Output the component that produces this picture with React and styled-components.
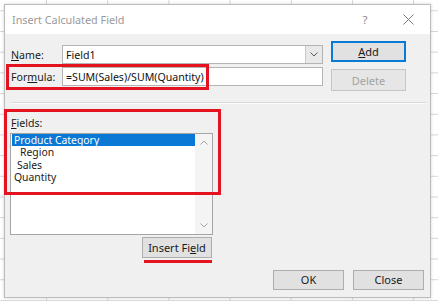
import React from 'react';
import styled, { createGlobalStyle } from 'styled-components';

const GlobalStyle = createGlobalStyle`
  html, body {
    margin: 0;
    padding: 0;
  }
  body {
    font-family: "Noto Sans", "Open Sans", sans-serif;
  }
`;

// excel sheet grid showing round the dialog
const Sheet = styled.div`
  width: 438px;
  height: 301px;
  box-sizing: border-box;
  padding: 4px 0 0 4px;
  overflow: hidden;
  background-color: #fff;
  background-image:
    linear-gradient(to right, #d6d6d6 1px, transparent 1px),
    linear-gradient(to bottom, #d6d6d6 1px, transparent 1px);
  background-size: 61.2px 100%, 100% 20.7px;
  background-position: 46px 0, 0 10.3px;
`;

const Dialog = styled.div`
  position: relative;
  width: 427px;
  height: 294px;
  box-sizing: border-box;
  border: 1px solid #bcbcbc;
  background: #f0f0f0;
  box-shadow: 0 0 3px rgba(0, 0, 0, 0.18);
  display: flex;
  flex-direction: column;
  font-size: 10.6px;
  color: #1a1a1a;
`;

const TitleBar = styled.div`
  height: 29px;
  background: #fff;
  display: flex;
  align-items: center;
  padding-left: 7px;
  color: #9a9a9a;
  font-size: 10.8px;
`;

const Title = styled.span`
  flex: 1;
`;

const TitleButton = styled.span`
  width: ${p => p.$w}px;
  display: flex;
  justify-content: center;
  align-items: center;
  color: #8c8c8c;
  font-size: 11.5px;
`;

const Body = styled.div`
  flex: 1;
  display: flex;
  flex-direction: column;
`;

const TopSection = styled.div`
  display: flex;
  gap: 8px;
  padding: 7px 0 0 6px;
`;

const Form = styled.div`
  width: 312px;
  margin-top: 4px;
  display: flex;
  flex-direction: column;
  gap: 3px;
`;

const Row = styled.div`
  display: flex;
  align-items: center;
  height: 19px;
`;

const Label = styled.label`
  width: 51px;
  flex-shrink: 0;
`;

const Key = styled.span`
  text-decoration: underline;
  text-underline-offset: 1px;
`;

const Field = styled.div`
  flex: 1;
  height: 19px;
  box-sizing: border-box;
  border: 1px solid #b4b4b4;
  background: #fff;
  display: flex;
  align-items: center;
  padding-left: 3px;
  color: #111;
`;

const FieldText = styled.span`
  flex: 1;
`;

const DropButton = styled.span`
  width: 16px;
  height: 17px;
  border-left: 1px solid #c8c8c8;
  background: #e8e8e8;
  display: flex;
  align-items: center;
  justify-content: center;
`;

const ButtonColumn = styled.div`
  display: flex;
  flex-direction: column;
  gap: 7px;
`;

const Button = styled.button`
  width: ${p => p.$w || 71}px;
  height: ${p => p.$h || 21}px;
  box-sizing: border-box;
  margin: 0;
  padding: 0;
  font-family: inherit;
  font-size: 11px;
  background: ${p => (p.disabled ? '#e6e6e6' : '#e1e1e1')};
  color: ${p => (p.disabled ? '#a3a3a3' : '#1a1a1a')};
  border: ${p => (p.$default ? '2px solid #0a7bd3' : '1px solid #adadad')};
  ${p => p.disabled && 'border-color: #c6c6c6;'}
`;

const Separator = styled.div`
  margin: 11px 4px 0 6px;
  height: 0;
  border-top: 1px solid #d9d9d9;
  border-bottom: 1px solid #fbfbfb;
`;

const FieldsSection = styled.div`
  width: 203px;
  margin-left: 5px;
  margin-top: 12px;
  display: flex;
  flex-direction: column;
  align-items: flex-end;
`;

const FieldsLabel = styled.div`
  align-self: stretch;
  padding-left: 1px;
  line-height: 14px;
`;

const ListBox = styled.div`
  margin-top: 3px;
  width: 203px;
  height: 102px;
  box-sizing: border-box;
  border: 1px solid #a5a5a5;
  background: #fff;
  display: flex;
`;

const Items = styled.div`
  flex: 1;
  padding: 0 0 0 1px;
`;

const Item = styled.div`
  height: 12.4px;
  line-height: 12.4px;
  font-size: 10.4px;
  padding-left: ${p => p.$indent}px;
  background: ${p => (p.$selected ? '#0a78d4' : 'transparent')};
  color: ${p => (p.$selected ? '#fff' : '#1a1a1a')};
  white-space: nowrap;
`;

const ScrollTrack = styled.div`
  width: 17px;
  background: #f4f4f4;
  display: flex;
  flex-direction: column;
  justify-content: space-between;
  align-items: center;
  padding: 6px 0 6px;
`;

const InsertButton = styled(Button)`
  margin-top: 2px;
  margin-right: 1px;
`;

const RedUnderline = styled.div`
  margin-top: 2px;
  margin-right: 1px;
  width: 68px;
  height: 2.5px;
  background: #e3141f;
`;

const Footer = styled.div`
  display: flex;
  justify-content: flex-end;
  gap: 9px;
  padding: 7px 6px 0 0;
`;

// red annotation boxes drawn over the dialog
const Highlight = styled.div`
  position: absolute;
  left: ${p => p.$x}px;
  top: ${p => p.$y}px;
  width: ${p => p.$w}px;
  height: ${p => p.$h}px;
  box-sizing: border-box;
  border: 3px solid #e3141f;
  pointer-events: none;
`;

const Chevron = ({ up, color = '#a6a6a6', w = 8 }) => (
  <svg width={w} height={w / 2 + 1} viewBox="0 0 8 5">
    <path d={up ? 'M0.5 4.5 L4 1 L7.5 4.5' : 'M0.5 0.5 L4 4 L7.5 0.5'} fill="none" stroke={color} strokeWidth="1" />
  </svg>
);

const fields = [
  { name: 'Product Category', indent: 2, selected: true },
  { name: 'Region', indent: 8 },
  { name: 'Sales', indent: 5 },
  { name: 'Quantity', indent: 2 },
];

export default function App() {
  return (
    <Sheet>
      <GlobalStyle />
      <Dialog>
        <TitleBar>
          <Title>Insert Calculated Field</Title>
          <TitleButton $w={42}>?</TitleButton>
          <TitleButton $w={44}>
            <svg width="11" height="11" viewBox="0 0 11 11">
              <path d="M0.5 0.5 L10.5 10.5 M10.5 0.5 L0.5 10.5" stroke="#7a7a7a" strokeWidth="1" />
            </svg>
          </TitleButton>
        </TitleBar>
        <Body>
          <TopSection>
            <Form>
              <Row>
                <Label><Key>N</Key>ame:</Label>
                <Field>
                  <FieldText>Field1</FieldText>
                  <DropButton><Chevron color="#5a5a5a" /></DropButton>
                </Field>
              </Row>
              <Row>
                <Label>For<Key>m</Key>ula:</Label>
                <Field>
                  <FieldText>=SUM(Sales)/SUM(Quantity)</FieldText>
                </Field>
              </Row>
            </Form>
            <ButtonColumn>
              <Button $w={75} $default><Key>A</Key>dd</Button>
              <Button $w={75} $h={22} disabled>Delete</Button>
            </ButtonColumn>
          </TopSection>
          <Separator />
          <FieldsSection>
            <FieldsLabel><Key>F</Key>ields:</FieldsLabel>
            <ListBox>
              <Items>
                {fields.map(f => (
                  <Item key={f.name} $indent={f.indent} $selected={f.selected}>{f.name}</Item>
                ))}
              </Items>
              <ScrollTrack>
                <Chevron up />
                <Chevron />
              </ScrollTrack>
            </ListBox>
            <InsertButton $w={70}>Insert Fi<Key>e</Key>ld</InsertButton>
            <RedUnderline />
          </FieldsSection>
          <Footer>
            <Button $h={20}>OK</Button>
            <Button $h={20}>Close</Button>
          </Footer>
        </Body>
        <Highlight $x={1} $y={59} $w={203} $h={26} />
        <Highlight $x={-1} $y={104} $w={217} $h={86} />
      </Dialog>
    </Sheet>
  );
}
